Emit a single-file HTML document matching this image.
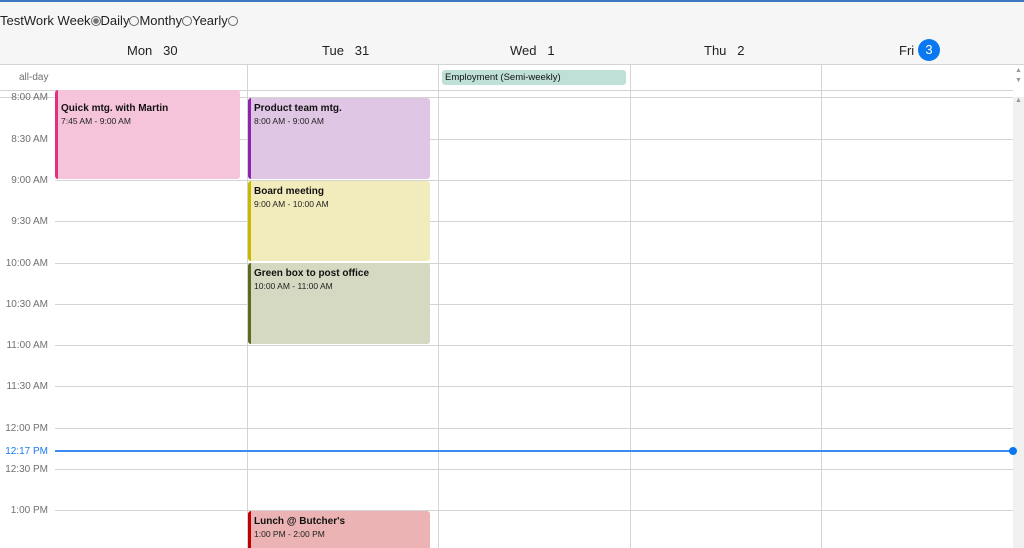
<!DOCTYPE html>
<html><head><meta charset="utf-8"><style>
*{margin:0;padding:0;box-sizing:border-box}
html,body{width:1024px;height:548px;overflow:hidden}
body{background:#fff;font-family:"Segoe UI","Liberation Sans",sans-serif;color:#222;position:relative}
.a{position:absolute}
.hl{position:absolute;height:1px;background:#d4d4d4}
.vl{position:absolute;width:1px;background:#d4d4d4}
.tl{position:absolute;left:0;font-size:10px;color:#707070;line-height:12px;white-space:nowrap;width:48px;text-align:right}
.ev{position:absolute;border-radius:3px;padding:4px 3px;border-left:3px solid;overflow:hidden}
.ev b{display:block;font-size:10px;font-weight:bold;color:#111;line-height:14px}
.ev i{display:block;font-style:normal;font-size:8.5px;color:#222;line-height:11px}
.dh{position:absolute;top:43px;font-size:13px;color:#222}
</style></head><body>
<div class="a" style="left:0;top:0;width:1024px;height:2px;background:#3a78c0"></div>
<div class="a" style="left:0;top:2px;width:1024px;height:63px;background:#f6f6f6"></div>
<div class="a" style="left:0;top:13px;font-size:13px;color:#222;white-space:nowrap">TestWork Week<span style="display:inline-block;width:10px;height:10px;border:1px solid #666;border-radius:50%;background:radial-gradient(#777 45%,#fff 55%);vertical-align:-1px"></span>Daily<span style="display:inline-block;width:10px;height:10px;border:1px solid #666;border-radius:50%;vertical-align:-1px"></span>Monthy<span style="display:inline-block;width:10px;height:10px;border:1px solid #666;border-radius:50%;vertical-align:-1px"></span>Yearly<span style="display:inline-block;width:10px;height:10px;border:1px solid #666;border-radius:50%;vertical-align:-1px"></span></div>
<div class="dh" style="left:127px">Mon&nbsp;&nbsp; 30</div>
<div class="dh" style="left:322px">Tue&nbsp;&nbsp; 31</div>
<div class="dh" style="left:510px">Wed&nbsp;&nbsp; 1</div>
<div class="dh" style="left:704px">Thu&nbsp;&nbsp; 2</div>
<div class="dh" style="left:899px">Fri</div>
<div class="a" style="left:918px;top:39px;width:22px;height:22px;border-radius:50%;background:#0a78f0;color:#fff;font-size:13px;text-align:center;line-height:21px">3</div>
<div class="hl" style="left:0;top:64px;width:1024px"></div>
<div class="a" style="left:19px;top:72px;font-size:10px;color:#707070">all-day</div>
<div class="hl" style="left:0;top:90px;width:1013px"></div>
<div class="hl" style="left:0;top:97px;width:1013px"></div>
<div class="a" style="left:1013px;top:97px;width:11px;height:451px;background:#f0f0f0"></div>
<div class="a" style="left:1015px;top:66px;font-size:7px;color:#999;line-height:10px">▲<br>▼</div>
<div class="a" style="left:1015px;top:97px;font-size:7px;color:#999">▲</div>
<div class="vl" style="left:247px;top:65px;height:483px"></div>
<div class="vl" style="left:438px;top:65px;height:483px"></div>
<div class="vl" style="left:630px;top:65px;height:483px"></div>
<div class="vl" style="left:821px;top:65px;height:483px"></div>
<div class="hl" style="left:55px;top:139px;width:958px"></div>
<div class="hl" style="left:55px;top:180px;width:958px"></div>
<div class="hl" style="left:55px;top:221px;width:958px"></div>
<div class="hl" style="left:55px;top:263px;width:958px"></div>
<div class="hl" style="left:55px;top:304px;width:958px"></div>
<div class="hl" style="left:55px;top:345px;width:958px"></div>
<div class="hl" style="left:55px;top:386px;width:958px"></div>
<div class="hl" style="left:55px;top:428px;width:958px"></div>
<div class="hl" style="left:55px;top:469px;width:958px"></div>
<div class="hl" style="left:55px;top:510px;width:958px"></div>
<div class="tl" style="top:92px">8:00 AM</div>
<div class="tl" style="top:134px">8:30 AM</div>
<div class="tl" style="top:175px">9:00 AM</div>
<div class="tl" style="top:216px">9:30 AM</div>
<div class="tl" style="top:258px">10:00 AM</div>
<div class="tl" style="top:299px">10:30 AM</div>
<div class="tl" style="top:340px">11:00 AM</div>
<div class="tl" style="top:381px">11:30 AM</div>
<div class="tl" style="top:423px">12:00 PM</div>
<div class="tl" style="top:446px;color:#1a7cf0">12:17 PM</div>
<div class="tl" style="top:464px">12:30 PM</div>
<div class="tl" style="top:505px">1:00 PM</div>
<div class="a" style="left:442px;top:70px;width:184px;height:15px;background:#bfe0d7;border-radius:3px;font-size:9.5px;padding-left:3px;line-height:15px;color:#111">Employment (Semi-weekly)</div>
<div class="ev" style="left:55px;top:90px;width:185px;height:89px;background:#f5c4da;border-color:#e0307e;padding-top:12px"><b>Quick mtg. with Martin</b><i>7:45 AM - 9:00 AM</i></div>
<div class="ev" style="left:248px;top:98px;width:182px;height:81px;background:#dfc6e4;border-color:#8e24aa"><b>Product team mtg.</b><i>8:00 AM - 9:00 AM</i></div>
<div class="ev" style="left:248px;top:181px;width:182px;height:80px;background:#f2ecbd;border-color:#c9b800"><b>Board meeting</b><i>9:00 AM - 10:00 AM</i></div>
<div class="ev" style="left:248px;top:263px;width:182px;height:81px;background:#d5d9c2;border-color:#5a6b1f"><b>Green box to post office</b><i>10:00 AM - 11:00 AM</i></div>
<div class="ev" style="left:248px;top:511px;width:182px;height:37px;background:#ebb3b3;border-color:#c00000;border-radius:3px 3px 0 0"><b>Lunch @ Butcher's</b><i>1:00 PM - 2:00 PM</i></div>
<div class="a" style="left:55px;top:450px;width:958px;height:2px;background:#3a8cf0"></div>
<div class="a" style="left:1009px;top:447px;width:8px;height:8px;border-radius:50%;background:#0a78f0"></div>
</body></html>
